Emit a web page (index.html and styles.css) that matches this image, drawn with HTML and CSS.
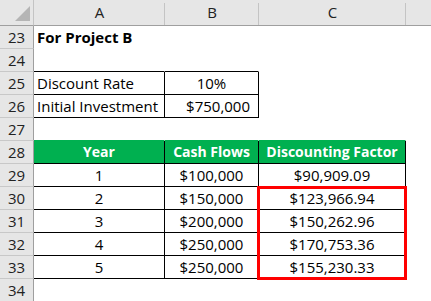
FILE: index.html
```html
<!DOCTYPE html>
<html>
<head>
<meta charset="utf-8">
<link rel="stylesheet" href="styles.css">
</head>
<body>
<div class="sheet">
  <div class="corner"><svg width="34" height="25" viewBox="0 0 34 25"><polygon points="30,6 30,21 15,21" fill="#b5b5b5"/></svg></div>
  <div class="hd">A</div>
  <div class="hd">B</div>
  <div class="hd">C</div>
  <div class="hd last"></div>

  <div class="rn">23</div><div class="c bold">For Project B</div><div class="c"></div><div class="c"></div><div class="c"></div>
  <div class="rn">24</div><div class="c bb"></div><div class="c bb"></div><div class="c"></div><div class="c"></div>
  <div class="rn">25</div><div class="c bb br">Discount Rate</div><div class="c bb br ctr">10%</div><div class="c"></div><div class="c"></div>
  <div class="rn">26</div><div class="c bb br">Initial Investment</div><div class="c bb br rt">$750,000</div><div class="c"></div><div class="c"></div>
  <div class="rn">27</div><div class="c bg"></div><div class="c bg"></div><div class="c bg"></div><div class="c"></div>
  <div class="rn">28</div><div class="c bb br th">Year</div><div class="c bb br th">Cash Flows</div><div class="c bb br th">Discounting Factor</div><div class="c"></div>
  <div class="rn">29</div><div class="c bb br ctr">1</div><div class="c bb br ctr">$100,000</div><div class="c bb br ctr">$90,909.09</div><div class="c"></div>
  <div class="rn">30</div><div class="c bb br ctr">2</div><div class="c bb br ctr">$150,000</div><div class="c bb br ctr">$123,966.94</div><div class="c"></div>
  <div class="rn">31</div><div class="c bb br ctr">3</div><div class="c bb br ctr">$200,000</div><div class="c bb br ctr">$150,262.96</div><div class="c"></div>
  <div class="rn">32</div><div class="c bb br ctr">4</div><div class="c bb br ctr">$250,000</div><div class="c bb br ctr">$170,753.36</div><div class="c"></div>
  <div class="rn">33</div><div class="c bb br ctr">5</div><div class="c bb br ctr">$250,000</div><div class="c bb br ctr">$155,230.33</div><div class="c"></div>
  <div class="rn">34</div><div class="c"></div><div class="c"></div><div class="c"></div><div class="c"></div>

  <div class="highlight"></div>
</div>
</body>
</html>
```

FILE: styles.css
```css
html, body {
  margin: 0;
  padding: 0;
  background: #fff;
}
.sheet {
  position: relative;
  width: 431px;
  height: 301px;
  overflow: hidden;
  display: grid;
  grid-template-columns: 34px 131px 94px 147px 25px;
  grid-template-rows: 26px repeat(12, 23px);
  font-family: "Open Sans", "Liberation Sans", sans-serif;
  font-size: 15px;
  color: #000;
}
.corner {
  background: #e6e6e6;
  border-bottom: 1px solid #9f9f9f;
  border-right: 1px solid #c4c4c4;
  box-sizing: border-box;
}
.corner svg {
  display: block;
}
.hd {
  box-sizing: border-box;
  background-color: #e6e6e6;
  background-image: linear-gradient(#c4c4c4, #c4c4c4);
  background-repeat: no-repeat;
  background-size: 1px 22px;
  background-position: right 0 bottom 0;
  border-bottom: 1px solid #9f9f9f;
  text-align: center;
  line-height: 25px;
  color: #222;
}
.hd.last {
  background-image: none;
}
.rn {
  box-sizing: border-box;
  background: #e6e6e6;
  border-bottom: 1px solid #c8c8c8;
  border-right: 1px solid #9f9f9f;
  text-align: center;
  line-height: 22px;
  color: #222;
}
.c {
  box-sizing: border-box;
  border-right: 1px solid transparent;
  border-bottom: 1px solid transparent;
  padding: 0 3px;
  line-height: 22px;
  white-space: nowrap;
  overflow: visible;
}
.bold {
  font-weight: 700;
}
.bb {
  border-bottom-color: #000;
}
.br {
  border-right-color: #000;
}
.bg {
  border-bottom-color: #00b050;
}
.ctr {
  text-align: center;
}
.rt {
  text-align: right;
  padding-right: 8px;
}
.th {
  background: #00b050;
  color: #fff;
  font-weight: 700;
  font-size: 14px;
  text-align: center;
}
.highlight {
  position: absolute;
  left: 257px;
  top: 186px;
  width: 150px;
  height: 94px;
  box-sizing: border-box;
  border: 3px solid #ff0000;
}
```
